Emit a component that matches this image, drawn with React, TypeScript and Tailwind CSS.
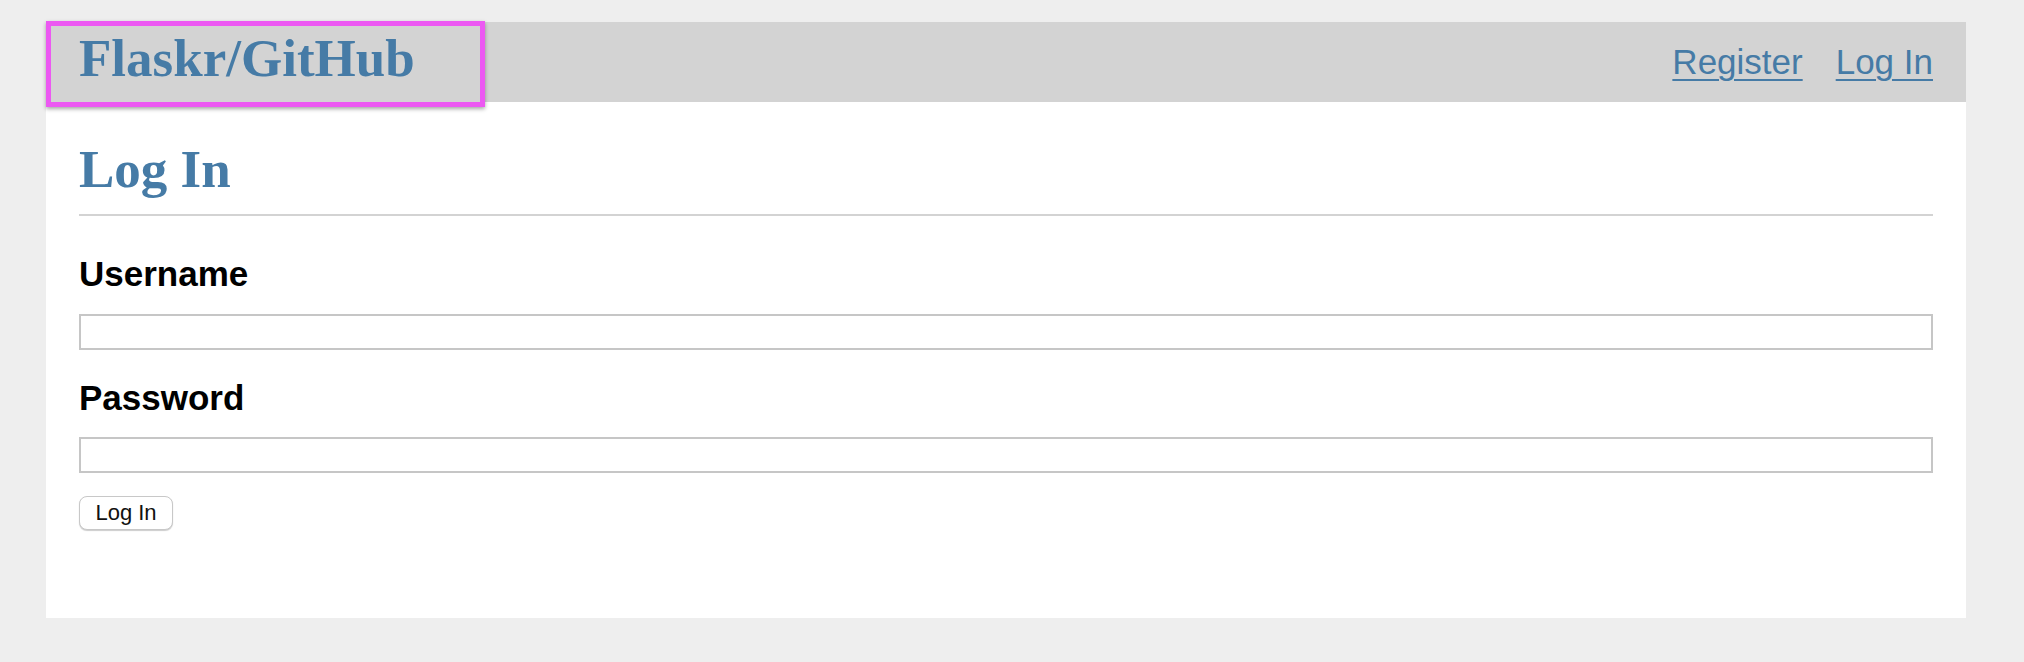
import React from 'react';

const linkColor = 'text-[#467ba6]';

const App: React.FC = () => {
    return (
        <div className="min-h-screen bg-[#eeeeee] pt-[22px] pl-[46px] font-['Liberation_Sans',Arial,sans-serif]">
            <div className="relative w-[1920px] bg-white">
                {/* Nav */}
                <nav className="flex h-[80px] items-start justify-between bg-[#d3d3d3] px-[33px]">
                    <h1 className={`mt-[10px] font-['Liberation_Serif','Times_New_Roman',serif] text-[53px] font-bold leading-none ${linkColor}`}>
                        <a href="#">Flaskr/GitHub</a>
                    </h1>
                    <ul className="mt-[22px] flex gap-[33px] text-[35px] leading-none">
                        <li>
                            <a href="#" className={`underline decoration-2 underline-offset-[5px] ${linkColor}`}>Register</a>
                        </li>
                        <li>
                            <a href="#" className={`underline decoration-2 underline-offset-[5px] ${linkColor}`}>Log In</a>
                        </li>
                    </ul>
                </nav>

                {/* Highlight overlay around the brand */}
                <div className="pointer-events-none absolute left-0 top-[-1px] h-[86px] w-[439px] border-[5px] border-[#ec58f2] shadow-[0_2px_4px_rgba(0,0,0,0.35)]" />

                {/* Content */}
                <section className="px-[33px] pb-[88px]">
                    <header className="border-b-2 border-[#d3d3d3] pb-[18px] pt-[41px]">
                        <h1 className={`font-['Liberation_Serif','Times_New_Roman',serif] text-[53px] font-bold leading-none ${linkColor}`}>
                            Log In
                        </h1>
                    </header>

                    <form className="flex flex-col" onSubmit={(e) => e.preventDefault()}>
                        <label htmlFor="username" className="mt-[40px] text-[35px] font-bold leading-none text-black">
                            Username
                        </label>
                        <input
                            id="username"
                            name="username"
                            className="mt-[23px] h-[36px] border-2 border-[#c6c6c6] bg-white outline-none"
                        />

                        <label htmlFor="password" className="mt-[30px] text-[35px] font-bold leading-none text-black">
                            Password
                        </label>
                        <input
                            id="password"
                            name="password"
                            type="password"
                            className="mt-[22px] h-[36px] border-2 border-[#c6c6c6] bg-white outline-none"
                        />

                        <div className="mt-[23px]">
                            <button
                                type="submit"
                                className="flex h-[34px] w-[94px] items-center justify-center rounded-[8px] border border-[#c8c8c8] bg-white text-[22px] leading-none text-[#111] shadow-[0_1px_1px_rgba(0,0,0,0.2)]"
                            >
                                Log In
                            </button>
                        </div>
                    </form>
                </section>
            </div>
        </div>
    );
};

export default App;
